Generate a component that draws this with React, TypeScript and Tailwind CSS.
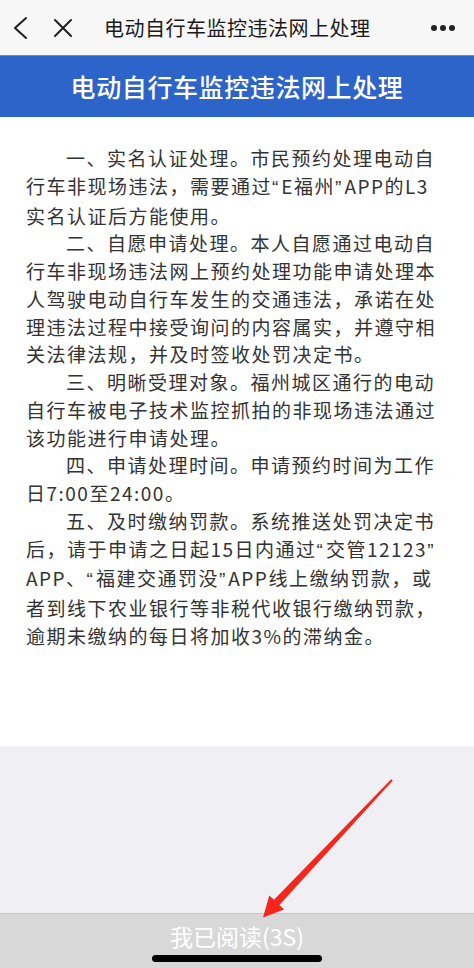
import React from 'react';

const paragraphs: string[][] = [
  ['一、实名认证处理。市民预约处理电动自', '行车非现场违法，需要通过“E福州”APP的L3', '实名认证后方能使用。'],
  [
    '二、自愿申请处理。本人自愿通过电动自',
    '行车非现场违法网上预约处理功能申请处理本',
    '人驾驶电动自行车发生的交通违法，承诺在处',
    '理违法过程中接受询问的内容属实，并遵守相',
    '关法律法规，并及时签收处罚决定书。',
  ],
  ['三、明晰受理对象。福州城区通行的电动', '自行车被电子技术监控抓拍的非现场违法通过', '该功能进行申请处理。'],
  ['四、申请处理时间。申请预约时间为工作', '日7:00至24:00。'],
  [
    '五、及时缴纳罚款。系统推送处罚决定书',
    '后，请于申请之日起15日内通过“交管12123”',
    'APP、“福建交通罚没”APP线上缴纳罚款，或',
    '者到线下农业银行等非税代收银行缴纳罚款，',
    '逾期未缴纳的每日将加收3%的滞纳金。',
  ],
];

// quotes are narrow (proportional) in the screenshot
const renderLine = (line: string) =>
  line.split(/([“”])/).map((part, k) =>
    part === '“' || part === '”' ? (
      <span key={k} className="font-['Liberation_Sans',sans-serif] tracking-[3px]">
        {part}
      </span>
    ) : (
      part
    )
  );

const App = () => {
  return (
    <div className="relative h-[968px] w-full overflow-hidden flex flex-col bg-white font-['Noto_Sans_CJK_SC',sans-serif]">
      {/* Nav bar */}
      <div className="h-[55px] shrink-0 bg-[#f7f7f7] flex items-center">
        <svg className="ml-[12px] w-[16px] h-[24px]" viewBox="0 0 16 24" fill="none" stroke="#1f1f1f" strokeWidth={2} strokeLinecap="round" strokeLinejoin="round">
          <path d="M14 2 L3 12 L14 22" />
        </svg>
        <svg className="ml-[24px] w-[22px] h-[22px]" viewBox="0 0 22 22" fill="none" stroke="#1f1f1f" strokeWidth={2} strokeLinecap="round">
          <path d="M3 3 L19 19 M19 3 L3 19" />
        </svg>
        <div className="ml-[30px] text-[20px] tracking-[0.5px] text-[#1a1a1a] leading-none">电动自行车监控违法网上处理</div>
        <div className="ml-auto mr-[19px] flex gap-[3px]">
          <span className="w-[6px] h-[6px] rounded-full bg-[#222]" />
          <span className="w-[6px] h-[6px] rounded-full bg-[#222]" />
          <span className="w-[6px] h-[6px] rounded-full bg-[#222]" />
        </div>
      </div>

      {/* Blue header */}
      <div className="h-[62px] shrink-0 bg-[#2c64c9] border-t border-[#5a8ee0] flex items-center justify-center">
        <h1 className="text-[25px] font-medium text-white tracking-[0.6px] leading-none">电动自行车监控违法网上处理</h1>
      </div>

      {/* Content */}
      <div className="h-[629px] shrink-0 bg-white pt-[27px] pl-[26px] text-[19px] leading-[27.75px] tracking-[1.5px] text-[#333]">
        {paragraphs.map((p, i) => (
          <div key={i}>
            {p.map((line, j) => (
              <div key={j} className={j === 0 ? 'whitespace-nowrap pl-[40px]' : 'whitespace-nowrap'}>
                {renderLine(line)}
              </div>
            ))}
          </div>
        ))}
      </div>

      {/* Empty gray area */}
      <div className="flex-1 bg-[#efeff4]" />

      {/* Bottom button */}
      <div className="h-[55px] shrink-0 bg-[#d8d8d8] border-t border-[#c6c6c6] flex justify-center pt-[11px]">
        <span className="text-[23px] text-white leading-none">我已阅读(3S)</span>
      </div>

      {/* Home indicator */}
      <div className="absolute left-[152px] top-[955px] w-[170px] h-[7px] rounded-full bg-black" />

      {/* Red annotation arrow */}
      <svg className="absolute left-0 top-0 w-[474px] h-[968px] pointer-events-none" viewBox="0 0 474 968">
        <polygon
          fill="#f5261b"
          points="392.8,780.6 279.4,905 284,909.5 263,917.5 269.3,895.5 274,899.8 391.2,779.2"
        />
      </svg>
    </div>
  );
};

export default App;
